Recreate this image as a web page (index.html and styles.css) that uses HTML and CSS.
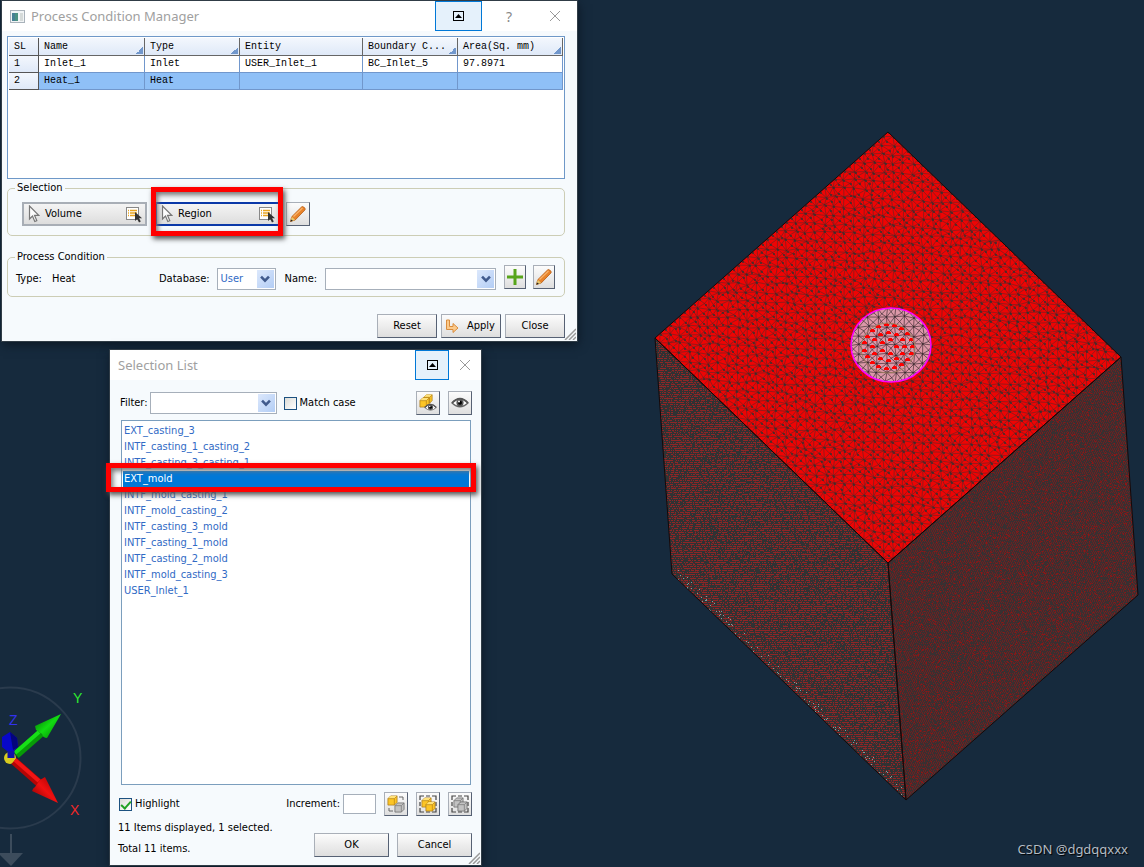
FILE: index.html
```html
<!DOCTYPE html>
<html lang="en">
<head>
<meta charset="utf-8">
<title>Process Condition Manager</title>
<link rel="stylesheet" href="styles.css">
</head>
<body>
<svg class="defs" aria-hidden="true">
  <defs>
    <linearGradient id="cone-g" x1="0" y1="0" x2="1" y2="1"><stop offset="0" stop-color="#006b00"/><stop offset=".5" stop-color="#12dc12"/><stop offset="1" stop-color="#007a00"/></linearGradient>
    <linearGradient id="cone-r" x1="1" y1="0" x2="0" y2="1"><stop offset="0" stop-color="#900"/><stop offset=".5" stop-color="#f01010"/><stop offset="1" stop-color="#700"/></linearGradient>
    <symbol id="i-pointer" viewBox="0 0 12 18"><path d="M1.500 1v13l3-3 2.300 5.500 2-.9L6.500 10.300h4.200z" fill="#fdfdfd" stroke="#777" stroke-width="1.200"/></symbol>
    <symbol id="i-list" viewBox="0 0 18 17"><rect x="1.500" y="1.500" width="12" height="12" fill="#fff" stroke="#888"/><path d="M3 4.500h1m1 0h7M3 7h1m1 0h7M3 9.500h1m1 0h6" stroke="currentColor" stroke-width="1.500"/><path d="M10 6v9l2.200-2 1.800 3.500 1.800-1-1.700-3.300h3z" fill="#333"/></symbol>
    <symbol id="i-pencil" viewBox="0 0 18 18"><path d="M1.500 16.500l1.200-4.700L12.500 2q1-1 2.200 0l1 1q1 1 .2 2L6.200 15z" fill="#e8832a" stroke="#b65a12" stroke-width=".8"/><path d="M4.500 11.500L13.500 3" stroke="#f9b36b" stroke-width="1.200"/><path d="M2.700 11.800l3.500 3.200-4.700 1.500z" fill="#e5c870"/><path d="M2 14.400l2 1.400-2.700 1z" fill="#222"/></symbol>
    <symbol id="i-up" viewBox="0 0 13 12"><rect x="1.500" y="1.500" width="10" height="9" fill="none" stroke="#000"/><path d="M3 8l3.500-4L10 8z" fill="#000"/></symbol>
    <symbol id="i-x" viewBox="0 0 12 12"><path d="M1 1l10 10M11 1L1 11" stroke="#999" stroke-width="1"/></symbol>
    <symbol id="i-chev" viewBox="0 0 10 8"><path d="M1.500 1.500L5 5l3.500-3.500" fill="none" stroke="#405a8c" stroke-width="2.300"/></symbol>
    <symbol id="i-eye" viewBox="0 0 18 12"><path d="M1 6q8-8.500 16 0-8 7.500-16 0z" fill="#fff" stroke="#666" stroke-width="1.200"/><path d="M1 6q8-8.500 16 0" fill="none" stroke="#555" stroke-width="1.800"/><circle cx="9" cy="5.800" r="3.600" fill="#555"/><circle cx="9" cy="5.800" r="2" fill="#000"/><circle cx="8" cy="4.600" r="1" fill="#fff"/></symbol>
    <symbol id="i-cube" viewBox="0 0 12 12"><path d="M1 4l3-3h7v7l-3 3H1z" fill="#fcc526" stroke="#a8791a" stroke-width=".8"/><path d="M1 4l3-3h7L8 4z" fill="#ffe27a"/><path d="M1 4h7v7M8 4l3-3" fill="none" stroke="#b98310" stroke-width=".8"/></symbol>
    <symbol id="i-gcube" viewBox="0 0 12 12"><path d="M1 4l3-3h7v7l-3 3H1z" fill="#c2c2c2" stroke="#666" stroke-width=".8"/><path d="M1 4h7v7M8 4l3-3" fill="none" stroke="#777" stroke-width=".8"/></symbol>
    <symbol id="i-marquee" viewBox="0 0 18 18"><path d="M1 5V1h4M7 1h4M13 1h4v4M17 7v4M17 13v4h-4M11 17H7M5 17H1v-4M1 11V7" fill="none" stroke="#444" stroke-width="1.200"/></symbol>
    <symbol id="i-grip" viewBox="0 0 12 12"><path d="M1 12L12 1M5 12l7-7M9 12l3-3" stroke="#9a9a9a" stroke-width="1.500"/></symbol>
  </defs>
</svg>
<main class="viewport">
  <canvas class="mesh" id="mesh" width="500" height="690" role="img" aria-label="Meshed mold"></canvas>

  <svg class="axes" viewBox="0 0 110 197" role="img" aria-label="Axes">
    <circle cx="10" cy="88" r="70.500" fill="none" stroke="#2a3b4d" stroke-width="2"/>
    <path d="M11 164v20" stroke="#3c4c5c" stroke-width="2"/><path d="M-2 183h25l-12 13z" fill="#3c4c5c"/>
    <circle cx="10" cy="88" r="6" fill="#d8cc20"/>
    <path d="M16 85L41 63" stroke="#079b07" stroke-width="8"/><path d="M15 83L39 62" stroke="#17e017" stroke-width="4"/>
    <path d="M35 56l26-12-14 24q-4 0-5-4l-6-4z" fill="url(#cone-g)"/>
    <path d="M14 91L39 113" stroke="#b50505" stroke-width="8"/><path d="M15 90L39 111" stroke="#f31515" stroke-width="4"/>
    <path d="M45 107l13 26-26-12q1-3 3-4l5-7z" fill="url(#cone-r)"/>
    <path d="M11 88V76" stroke="#1010a8" stroke-width="7"/><path d="M10 62l7 6 1 9-5 4H7l-5-4 0-10z" fill="#0808c8"/><path d="M10 62l7 6 1 9-5 3z" fill="#04047c"/>
    <text x="73" y="33" fill="#2fe82f">Y</text><text x="9" y="55" fill="#3232ee">Z</text><text x="70" y="145" fill="#f02828">X</text>
  </svg>

  <section class="window manager" aria-labelledby="t1">
    <header class="titlebar">
      <svg class="app-icon" viewBox="0 0 15 13"><rect x=".5" y=".5" width="14" height="12" fill="#f1f4f5" stroke="#a9b2ba"/><rect x="2" y="3" width="6" height="8" fill="#4b9282"/><rect x="2" y="3" width="3" height="8" fill="#4477a0" opacity=".6"/><rect x="10" y="3" width="3" height="8" fill="#d5dad9"/></svg>
      <h1 id="t1">Process Condition Manager</h1>
      <button class="tb up wide" aria-label="Roll up"><svg width="13" height="12"><use href="#i-up"/></svg></button>
      <button class="tb help" aria-label="Help">?</button>
      <button class="tb shut" aria-label="Close window"><svg width="12" height="12"><use href="#i-x"/></svg></button>
    </header>
    <div class="manager-body">
      <div class="grid-frame">
        <table class="grid">
          <colgroup><col class="c-sl"><col class="c-name"><col class="c-type"><col class="c-entity"><col class="c-type"><col></colgroup>
          <thead><tr><th>SL</th><th class="sort">Name</th><th class="sort">Type</th><th>Entity</th><th class="sort">Boundary C...</th><th class="sort">Area(Sq. mm)</th></tr></thead>
          <tbody>
            <tr><th>1</th><td>Inlet_1</td><td>Inlet</td><td>USER_Inlet_1</td><td>BC_Inlet_5</td><td>97.8971</td></tr>
            <tr class="current"><th>2</th><td>Heat_1</td><td>Heat</td><td></td><td></td><td></td></tr>
          </tbody>
        </table>
      </div>
      <fieldset class="group selection">
        <legend>Selection</legend>
        <div class="pickers">
          <button class="picker"><svg width="12" height="18"><use href="#i-pointer"/></svg><span>Volume</span><svg class="list-icon" width="18" height="17"><use href="#i-list"/></svg></button>
          <button class="picker active"><svg width="12" height="18"><use href="#i-pointer"/></svg><span>Region</span><svg class="list-icon" width="18" height="17"><use href="#i-list"/></svg></button>
          <button class="btn square" aria-label="Edit selection"><svg width="18" height="18"><use href="#i-pencil"/></svg></button>
        </div>
      </fieldset>
      <fieldset class="group condition">
        <legend>Process Condition</legend>
        <div class="condition-row">
          <span class="type-label">Type:</span><span class="type-value">Heat</span>
          <label for="db">Database:</label>
          <span class="combo db"><select id="db"><option>User</option></select><span class="drop"><svg width="12" height="9"><use href="#i-chev"/></svg></span></span>
          <label for="nm">Name:</label>
          <span class="combo nm"><select id="nm"><option></option></select><span class="drop"><svg width="12" height="9"><use href="#i-chev"/></svg></span></span>
          <button class="btn tool" aria-label="Add"><svg width="18" height="18" viewBox="0 0 18 18"><path d="M7.500 1h3v6.500H17v3h-6.500V17h-3v-6.500H1v-3h6.500z" fill="#57a51b"/></svg></button>
          <button class="btn tool" aria-label="Edit condition"><svg width="18" height="18"><use href="#i-pencil"/></svg></button>
        </div>
      </fieldset>
      <footer class="manager-actions">
        <button class="btn">Reset</button>
        <button class="btn apply"><svg width="14" height="14" viewBox="0 0 14 14"><path d="M1.500 1h3v6.500H8V4.500l5 4.500-5 4.500v-3H1.500z" fill="#fbc98a" stroke="#d98c3c"/></svg>Apply</button>
        <button class="btn">Close</button>
      </footer>
    </div>
    <svg class="grip" width="12" height="12"><use href="#i-grip"/></svg>
    <div class="callout region-callout"></div>
  </section>

  <section class="window picklist" aria-labelledby="t2">
    <header class="titlebar">
      <h2 id="t2">Selection List</h2>
      <button class="tb up" aria-label="Roll up"><svg width="13" height="12"><use href="#i-up"/></svg></button>
      <button class="tb shut" aria-label="Close window"><svg width="12" height="12"><use href="#i-x"/></svg></button>
    </header>
    <div class="picklist-body">
      <div class="filter-row">
        <label for="flt">Filter:</label>
        <span class="combo flt"><select id="flt"><option></option></select><span class="drop"><svg width="12" height="9"><use href="#i-chev"/></svg></span></span>
        <label class="check"><input type="checkbox">Match case</label>
        <span class="tools">
          <button class="btn square" aria-label="Show items"><svg width="18" height="18" viewBox="0 0 18 18"><use href="#i-cube" x="4" y="0" width="10" height="10"/><use href="#i-cube" x="0" y="3" width="11" height="11"/><use href="#i-eye" x="5" y="9" width="13" height="9"/></svg></button>
          <button class="btn square" aria-label="Preview"><svg width="18" height="12"><use href="#i-eye"/></svg></button>
        </span>
      </div>
      <ul class="items">
        <li>EXT_casting_3</li><li>INTF_casting_1_casting_2</li><li>INTF_casting_3_casting_1</li><li class="picked">EXT_mold</li><li>INTF_mold_casting_1</li><li>INTF_mold_casting_2</li><li>INTF_casting_3_mold</li><li>INTF_casting_1_mold</li><li>INTF_casting_2_mold</li><li>INTF_mold_casting_3</li><li>USER_Inlet_1</li>
      </ul>
      <div class="options-row">
        <label class="check"><input type="checkbox" checked>Highlight</label>
        <label class="inc-label" for="inc">Increment:</label><input class="inc" id="inc" type="text">
        <span class="tools">
          <button class="btn square" aria-label="Invert"><svg width="18" height="18" viewBox="0 0 18 18"><use href="#i-cube" x="0" y="0" width="11" height="11"/><use href="#i-gcube" x="7" y="7" width="11" height="11"/><path d="M12 2h4v3M2 13v3h4" fill="none" stroke="#666"/></svg></button>
          <button class="btn square" aria-label="Select all"><svg width="18" height="18" viewBox="0 0 18 18"><use href="#i-marquee" width="18" height="18"/><use href="#i-cube" x="2" y="2" width="11" height="11"/><use href="#i-cube" x="6" y="6" width="11" height="11"/></svg></button>
          <button class="btn square" aria-label="Select none"><svg width="18" height="18" viewBox="0 0 18 18"><use href="#i-marquee" width="18" height="18"/><use href="#i-gcube" x="2" y="2" width="11" height="11"/><use href="#i-gcube" x="6" y="6" width="11" height="11"/></svg></button>
        </span>
      </div>
      <footer class="status-row">
        <div class="status"><p>11 Items displayed, 1 selected.</p><p>Total 11 items.</p></div>
        <button class="btn">OK</button><button class="btn">Cancel</button>
      </footer>
    </div>
    <svg class="grip" width="12" height="12"><use href="#i-grip"/></svg>
    <div class="callout item-callout"></div>
  </section>
  <p class="credit">CSDN @dgdqqxxx</p>
</main>
<script src="mesh.js"></script>
</body>
</html>
```
FILE: styles.css
```css
* { box-sizing: border-box; }
body { margin: 0; background: #162a3d; color: #000; font: 11px/16px "DejaVu Sans Condensed", "DejaVu Sans", sans-serif; font-stretch: condensed; }
button, select, input { font: inherit; color: inherit; margin: 0; padding: 0; border-radius: 0; }
p, h1, h2, ul { margin: 0; padding: 0; }
svg { display: block; flex: none; }
.defs { position: absolute; width: 0; height: 0; }
.viewport { position: relative; min-height: 100vh; overflow: hidden; }
.mesh { position: absolute; left: 644px; top: 124px; }
.axes { position: absolute; left: 0; top: 670px; width: 110px; height: 197px; font: 14px "Liberation Sans", sans-serif; }
.credit { position: absolute; right: 16px; bottom: 8px; font: 13px/20px "Noto Sans", sans-serif; color: #b4bcc4; text-shadow: 1px 1px 1px #000; }

.window { position: absolute; background: #f6fafd; outline: 1px solid #303c46; box-shadow: 1px 3px 10px #0b1622; }
.manager { left: 2px; top: 1px; width: 575px; }
.picklist { left: 110px; top: 350px; width: 371px; }
.titlebar { display: flex; align-items: center; height: 30px; padding-left: 8px; background: #fff; }
.titlebar h1, .titlebar h2 { flex: 1; font: 13px/20px "Noto Sans", sans-serif; color: #a0a0a0; }
.app-icon { width: 15px; height: 13px; margin-right: 6px; }
.tb { display: flex; align-items: center; justify-content: center; height: 30px; border: 0; background: none; }
.tb.up { width: 34px; border: 1px solid #0078d7; background: #e5f1fb; }
.tb.wide { width: 47px; }
.tb.help { width: 54px; color: #888; font: 14px "Noto Sans", sans-serif; }
.tb.shut { width: 32px; }
.manager .tb.shut { width: 41px; padding-right: 4px; }

.manager-body { padding: 5px 12px 3px 5px; }
.grid-frame { height: 143px; padding: 1px; border: 1px solid #6e98c8; background: #fff; }
.grid { width: 100%; table-layout: fixed; border-collapse: separate; border-spacing: 0; font: 10px/16px "Liberation Mono", monospace; }
.c-sl { width: 30px; } .c-name { width: 106px; } .c-type { width: 95px; } .c-entity { width: 123px; }
.grid th, .grid td { height: 17px; padding: 0 5px; text-align: left; font-weight: normal; white-space: nowrap; border-right: 1px solid #7197cc; border-bottom: 1px solid #7197cc; }
.grid thead th { height: 18px; background: linear-gradient(#f3f7fd, #dfe9f8); border-color: #666; }
.grid tbody th, .grid thead th:first-child { border-color: #555; background: linear-gradient(#f3f7fd, #dfe9f8); }
.grid thead .sort { background: linear-gradient(135deg, transparent 50%, #7197cc 50%) right 1px bottom 1px / 7px 7px no-repeat, linear-gradient(#f3f7fd, #dfe9f8); }
.grid .current td { background: #8fc0f7; }

.group { min-width: 0; margin: 0; padding: 0 8px; border: 1px solid #cccdb5; border-radius: 5px; }
.group legend { padding: 0 2px; }
.selection { margin-top: 1px; padding: 6px 14px 9px; }
.selection legend { margin-left: -7px; }
.pickers { display: flex; align-items: center; }
.picker { display: flex; align-items: center; width: 125px; height: 24px; margin-right: 8px; padding: 0 2px 0 4px; border: 2px solid #a8aeb6; background: linear-gradient(#f4f4f4, #ddd); text-align: left; }
.picker span { flex: 1; padding-left: 5px; }
.picker.active { border-color: #0a38a8; margin-right: 6px; }
.list-icon { color: #e9a520; }
.btn { display: flex; align-items: center; justify-content: center; width: 60px; height: 24px; border: 1px solid #a9afb8; border-right-color: #566174; border-bottom-color: #566174; background: linear-gradient(#fcfcfc, #dedede); }
.btn.square { width: 24px; }
.btn.tool { width: 22px; margin-left: 7px; }
.condition { margin-top: 13px; padding-bottom: 7px; }
.condition legend { margin-left: -1px; }
.condition-row { display: flex; align-items: center; height: 24px; }
.condition-row > span, .condition-row > label { margin-top: 4px; }
.type-label { width: 36px; }
.type-value { width: 107px; }
.combo { position: relative; display: flex; height: 22px; margin-left: 8px; }
.combo select { width: 100%; padding: 0 20px 0 3px; border: 1px solid #a6afba; background: #fff; color: #316ac5; appearance: none; }
.combo .drop { position: absolute; right: 2px; top: 2px; bottom: 2px; width: 17px; display: grid; place-items: center; background: linear-gradient(135deg, #dce8fc, #b2cdf5); pointer-events: none; }
.combo.db { width: 59px; margin: 4px 9px 0 7px; }
.combo.nm { flex: 1; margin-right: 1px; }
.tool + .tool { margin-right: 1px; }
.manager-actions { display: flex; justify-content: flex-end; gap: 4px; margin-top: 17px; }
.apply { gap: 8px; padding-right: 2px; }
.grip { position: absolute; right: 1px; bottom: 1px; }

.picklist-body { padding: 11px 9px 6px 8px; }
.filter-row { display: flex; align-items: center; height: 24px; padding-left: 2px; }
.combo.flt { width: 127px; margin: 0 7px 0 2px; }
.check { display: flex; align-items: center; gap: 3px; }
.check input { appearance: none; width: 13px; height: 13px; border: 1px solid #1c5180; background: linear-gradient(135deg, #dcdcd7, #fff); }
.check input:checked::before { content: ""; display: block; width: 8px; height: 4px; margin: 2px 0 0 1px; border: solid #21a121; border-width: 0 0 2px 2px; transform: rotate(-48deg); }
.tools { display: flex; gap: 8px; margin-left: auto; }
.items { height: 365px; margin: 5px 1px 7px 3px; padding: 2px 1px; border: 1px solid #7b9ebd; background: #fff; color: #316ac5; list-style: none; }
.items li { padding-left: 1px; }
.items .picked { background: #0078d7; color: #fff; }
.options-row { display: flex; align-items: center; height: 24px; padding-left: 1px; }
.inc-label { margin-left: auto; }
.inc { width: 33px; height: 20px; margin-left: 3px; border: 1px solid #a6afba; background: #fff; }
.options-row .tools { margin-left: 8px; }
.status-row { display: flex; align-items: flex-end; gap: 8px; margin-top: 1px; }
.status { flex: 1; line-height: 21px; }
.status-row .btn { width: 75px; margin-bottom: 2px; }
.callout { position: absolute; border: 5px solid #f00; box-shadow: 2px 3px 5px #555, inset 2px 3px 5px #777; pointer-events: none; }
.region-callout { left: 149px; top: 186px; width: 132px; height: 49px; }
.item-callout { left: -4px; top: 113px; width: 370px; height: 29px; }
```
FILE: mesh.js
```js
const canvas = document.getElementById("mesh");
const ctx = canvas.getContext("2d");
ctx.translate(-644, -124);

let seed = 7;
const rnd = () => (seed = (seed * 16807) % 2147483647) / 2147483647;

const top4 = [[888, 132], [1121, 357], [888, 563], [655, 338]];
const left4 = [[655, 338], [888, 563], [906, 800], [672, 574]];
const right4 = [[888, 563], [1121, 357], [1138, 595], [906, 800]];

function outline(pts) {
  ctx.beginPath();
  pts.forEach(([x, y]) => ctx.lineTo(x, y));
  ctx.closePath();
}

function side(pts, base, pick) {
  ctx.save();
  outline(pts);
  ctx.clip();
  ctx.fillStyle = base;
  ctx.fillRect(644, 320, 500, 500);
  for (let y = 330; y < 805; y++) {
    for (let x = 650; x < 1142; x++) {
      const c = pick(x, y);
      if (c) { ctx.fillStyle = c; ctx.fillRect(x, y, 1, 1); }
    }
  }
  ctx.restore();
}

side(left4, "#303233", (x, y) => {
  const edge = y > 545 + (x - 655) * 0.97 && rnd() < 0.05;
  if (edge) return "#7aa0a0";
  if (y % 2 === 0) return rnd() < 0.6 ? "#8f2627" : null;
  return x % 2 && rnd() < 0.2 ? "#6c2627" : null;
});
side(right4, "#393031", (x, y) =>
  (x + (y >> 1)) % 2 === 0 && rnd() < 0.7 ? "#6b2122" : rnd() < 0.07 ? "#8e1515" : null);

function net(origin, a, b, n, jitter, dots) {
  const p = [];
  for (let i = 0; i <= n; i++) {
    p[i] = [];
    for (let j = 0; j <= n; j++) {
      const inside = i && j && i < n && j < n;
      const u = (i + (inside ? (rnd() - 0.5) * jitter : 0)) / n;
      const v = (j + (inside ? (rnd() - 0.5) * jitter : 0)) / n;
      p[i][j] = [origin[0] + a[0] * u + b[0] * v, origin[1] + a[1] * u + b[1] * v];
    }
  }
  ctx.beginPath();
  const line = (s, t) => { ctx.moveTo(...s); ctx.lineTo(...t); };
  for (let i = 0; i < n; i++) {
    for (let j = 0; j < n; j++) {
      line(p[i][j], p[i + 1][j]);
      line(p[i][j], p[i][j + 1]);
      if ((i + j) % 2) line(p[i][j], p[i + 1][j + 1]);
      else line(p[i + 1][j], p[i][j + 1]);
      if (dots) ctx.fillRect(Math.round(p[i][j][0]), Math.round(p[i][j][1]), 2, 2);
    }
  }
  ctx.stroke();
}

ctx.save();
outline(top4);
ctx.clip();
ctx.fillStyle = "#ee0404";
ctx.fillRect(650, 130, 480, 440);
ctx.fillStyle = "rgba(48,50,50,.7)";
ctx.strokeStyle = "rgba(48,50,50,.5)";
ctx.lineWidth = 0.9;
net([888, 132], [233, 225], [-233, 206], 48, 0.5, true);
ctx.restore();

ctx.strokeStyle = "#150808";
ctx.lineWidth = 1;
[top4, left4, right4].forEach((f) => { outline(f); ctx.stroke(); });

ctx.save();
ctx.beginPath();
ctx.ellipse(891, 345, 40, 37, 0, 0, Math.PI * 2);
ctx.clip();
ctx.fillStyle = "#dc98a8";
ctx.fillRect(850, 305, 84, 84);
ctx.strokeStyle = "rgba(40,30,35,.6)";
net([891, 285], [60, 60], [-60, 60], 13, 0.4, false);
ctx.restore();

ctx.fillStyle = "#f00";
[[8, 5], [16, 12], [24, 19]].forEach(([r, count]) => {
  for (let k = 0; k < count; k++) {
    const t = (k / count) * Math.PI * 2;
    ctx.fillRect(Math.round(886 + r * Math.cos(t)), Math.round(346 + r * 0.9 * Math.sin(t)), 5, 2);
    ctx.fillRect(Math.round(887 + r * Math.cos(t)), Math.round(345 + r * 0.9 * Math.sin(t)), 3, 1);
  }
});
ctx.lineWidth = 1;
ctx.strokeStyle = "#a08060";
ctx.beginPath();
ctx.ellipse(888, 348, 27, 25, 0, 0, Math.PI * 2);
ctx.stroke();
ctx.strokeStyle = "#f0f";
ctx.lineWidth = 1.5;
ctx.beginPath();
ctx.ellipse(891, 345, 40, 37, 0, 0, Math.PI * 2);
ctx.stroke();
```
